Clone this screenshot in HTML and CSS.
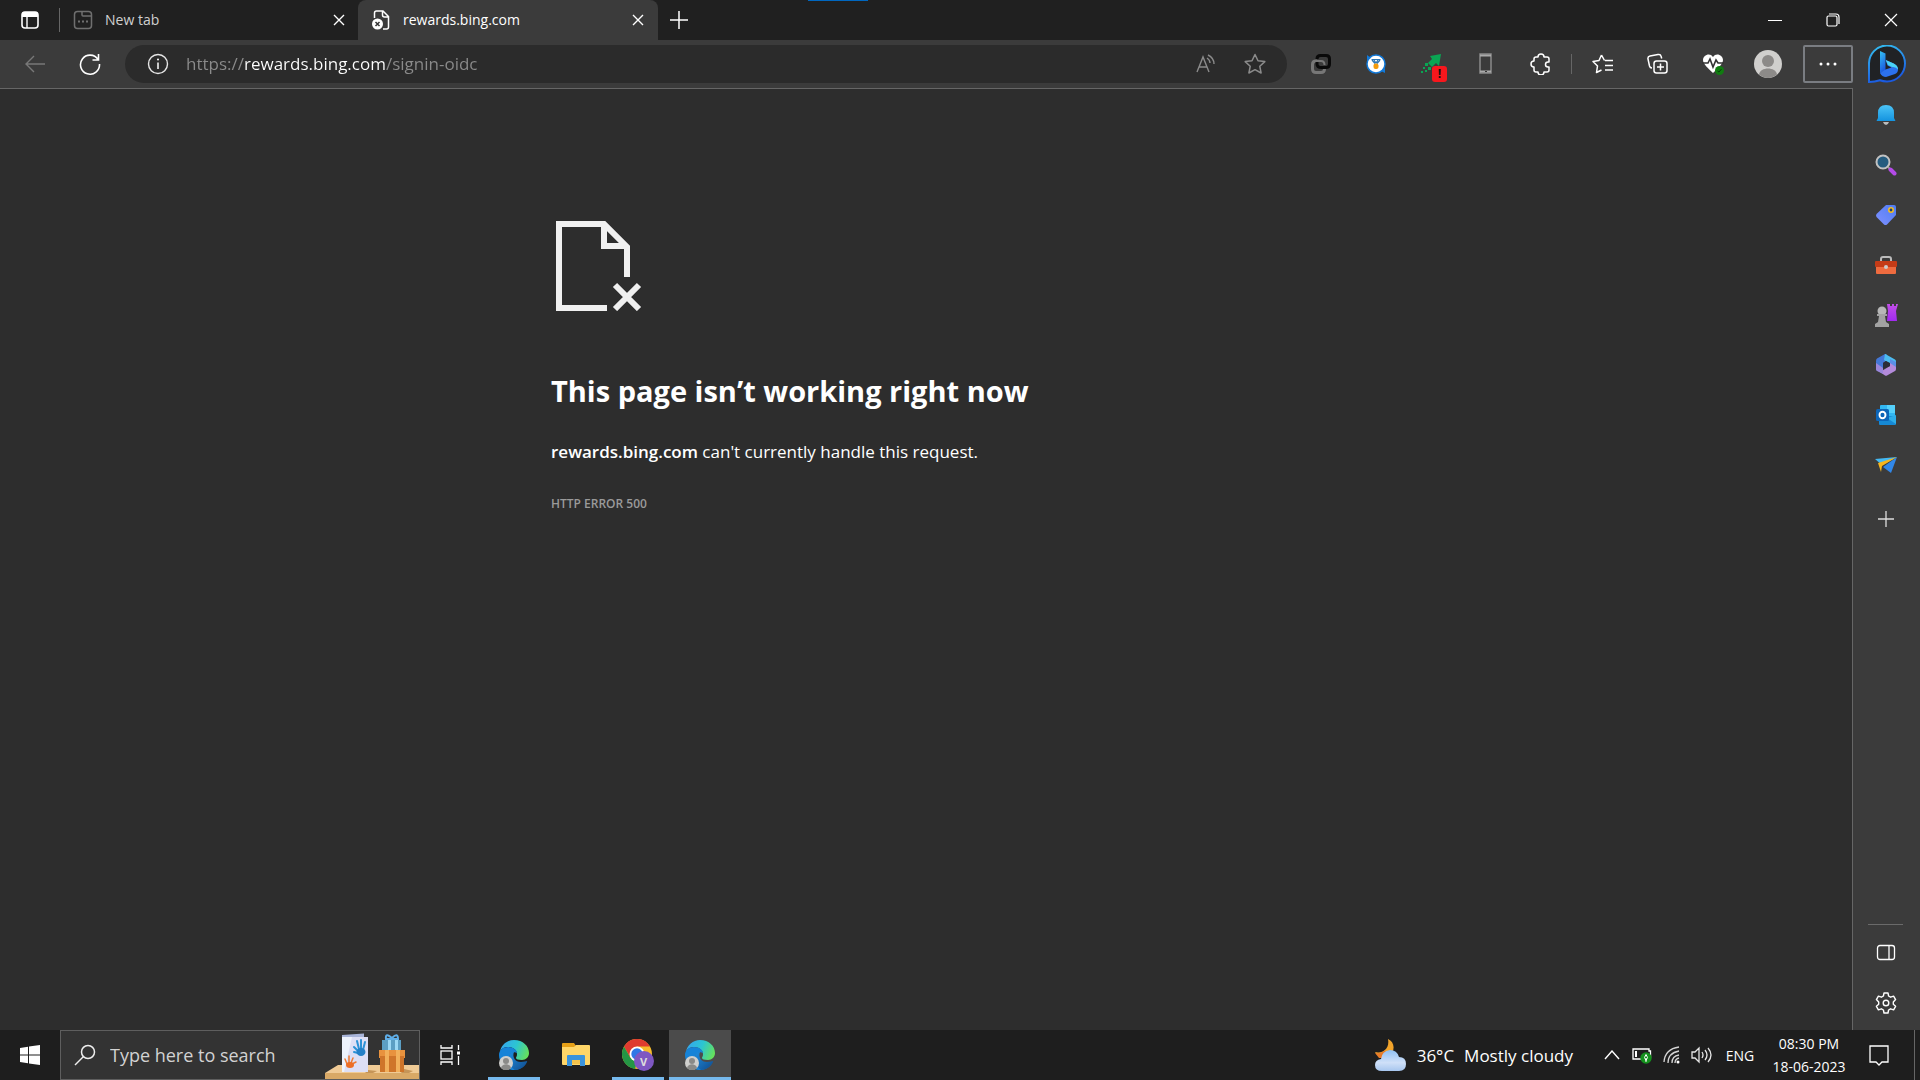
FILE: index.html
```html
<!DOCTYPE html>
<html lang="en">
<head>
    <meta charset="UTF-8">
    <meta name="viewport" content="width=device-width, initial-scale=1.0">
    <title>rewards.bing.com</title>
    <link rel="stylesheet" href="styles.css">
</head>
<body>
<!-- shared symbols -->
<svg class="defs" aria-hidden="true">
    <defs>
        <linearGradient id="edgeTop" x1="0" y1="0.3" x2="1" y2="0.6">
            <stop offset="0" stop-color="#35a5ee"/>
            <stop offset="0.5" stop-color="#2cc5d2"/>
            <stop offset="1" stop-color="#66e15b"/>
        </linearGradient>
        <linearGradient id="edgeLow" x1="0" y1="0" x2="1" y2="1">
            <stop offset="0" stop-color="#1d8de0"/>
            <stop offset="1" stop-color="#114a8b"/>
        </linearGradient>
        <linearGradient id="bingBlue" x1="0" y1="0" x2="0.3" y2="1">
            <stop offset="0" stop-color="#35c3f2"/>
            <stop offset="1" stop-color="#1b5ae0"/>
        </linearGradient>
        <linearGradient id="bellBlue" x1="0" y1="0" x2="0" y2="1">
            <stop offset="0" stop-color="#4cc4f7"/>
            <stop offset="1" stop-color="#1493df"/>
        </linearGradient>
        <linearGradient id="tagBlue" x1="1" y1="0" x2="0" y2="1">
            <stop offset="0" stop-color="#4f7df2"/>
            <stop offset="1" stop-color="#7f90ff"/>
        </linearGradient>
        <linearGradient id="rookPurple" x1="0" y1="0" x2="0" y2="1">
            <stop offset="0" stop-color="#c24fe8"/>
            <stop offset="1" stop-color="#a12af0"/>
        </linearGradient>
        <linearGradient id="cloud" x1="0" y1="0" x2="0" y2="1">
            <stop offset="0" stop-color="#8fc0f2"/>
            <stop offset="0.6" stop-color="#cfe0f8"/>
            <stop offset="1" stop-color="#a7c6ee"/>
        </linearGradient>
    </defs>
    <symbol id="edge" viewBox="0 0 30 30">
        <path d="M1 12C2 5 8 0 15 0c9 0 15 6 15 13 0 4-3 7-7 7-4 0-6-1-6-2 0-1 1-1 1-4 0-4-4-7-9-7-4 0-7 2-8 5z" fill="url(#edgeTop)"/>
        <path d="M0 15c0-5 4-8 9-8 5 0 9 3 9 6-3-2-8 0-8 5 0 6 5 9 10 9 3 0 6-2 7-4-2 4-7 7-12 7C7 30 0 23 0 15z" fill="#1683d8"/>
        <path d="M10 17c0-3 2-5 5-5-2 5 1 10 7 10 3 0 5-1 6-1 1 1-4 9-12 9-4-2-6-7-6-13z" fill="url(#edgeLow)"/>
        <circle cx="7" cy="23" r="7" fill="#d0d0ce"/>
        <circle cx="7" cy="21" r="3" fill="#8a8a88"/>
        <path d="M2 28c1-5 9-5 10 0-3 3-7 3-10 0z" fill="#8a8a88"/>
    </symbol>
    <symbol id="cross" viewBox="0 0 12 12">
        <path d="M1 1l10 10M11 1L1 11" fill="none" stroke="currentColor" stroke-width="1.4"/>
    </symbol>
</svg>

<div class="screen">
    <header class="tab-strip">
        <button class="tab-menu" aria-label="Tab actions menu">
            <svg width="20" height="20" viewBox="0 0 20 20">
                <rect x="2" y="2" width="16" height="16" rx="3" fill="none" stroke="#fff" stroke-width="1.6"/>
                <path d="M2 3.500q0-1.500 2-1.500h12q2 0 2 1.500V7H2z" fill="#fff"/>
                <path d="M7 7v11" stroke="#fff" stroke-width="1.400"/>
            </svg>
        </button>
        <div class="tab">
            <svg class="favicon" width="20" height="20" viewBox="0 0 20 20" fill="none" stroke="#6f6f6f" stroke-width="1.5">
                <rect x="1.500" y="1.500" width="17" height="17" rx="3"/>
                <path d="M9 2v3q0 1 1 1h8"/>
                <path d="M5 11.500h2M9 11.500h2M13 11.500h2" stroke-width="2"/>
            </svg>
            <span class="tab-title">New tab</span>
            <button class="tab-close" aria-label="Close tab"><svg width="12" height="12"><use href="#cross"/></svg></button>
        </div>
        <div class="tab tab-active">
            <svg class="favicon" width="20" height="20" viewBox="0 0 20 20">
                <path d="M3.500 8V3q0-2 2-2H12l5.500 5.500V17q0 2-2 2H12M11.500 1v4q0 2 2 2h4" fill="none" stroke="#fff" stroke-width="1.500"/>
                <circle cx="6.500" cy="14" r="5.500" fill="#fff"/>
                <path d="M4.500 12l4 4M8.500 12l-4 4" stroke="#333" stroke-width="1.500"/>
            </svg>
            <span class="tab-title">rewards.bing.com</span>
            <button class="tab-close" aria-label="Close tab"><svg width="12" height="12"><use href="#cross"/></svg></button>
        </div>
        <button class="new-tab" aria-label="New tab">
            <svg width="18" height="18" viewBox="0 0 18 18"><path d="M9 0v18M0 9h18" stroke="#fff" stroke-width="1.500"/></svg>
        </button>
        <div class="window-buttons">
            <button aria-label="Minimize"><svg width="14" height="14" viewBox="0 0 14 14"><path d="M0 7.500h14" stroke="#fff"/></svg></button>
            <button aria-label="Restore"><svg width="14" height="14" viewBox="0 0 14 14" fill="none" stroke="#fff" stroke-width="1.200"><rect x="1" y="3" width="10" height="10" rx="1.500"/><path d="M3 1h7q3 0 3 3v7"/></svg></button>
            <button aria-label="Close"><svg width="14" height="14" viewBox="0 0 14 14"><path d="M1 1l12 12M13 1L1 13" stroke="#fff" stroke-width="1.200"/></svg></button>
        </div>
        <span class="drag-mark"></span>
    </header>

    <nav class="toolbar">
        <button class="nav-button" aria-label="Back">
            <svg width="22" height="18" viewBox="0 0 22 18" fill="none" stroke="#787878" stroke-width="1.400"><path d="M21 9H2M10 1L2 9l8 8"/></svg>
        </button>
        <button class="nav-button" aria-label="Refresh">
            <svg width="22" height="22" viewBox="0 0 22 22" fill="none" stroke="#fff" stroke-width="1.600"><path d="M19 6.500A9.500 9.500 0 1 0 20.500 11M19.500 1v6h-6"/></svg>
        </button>
        <div class="address">
            <button class="icon-button site-info" aria-label="View site information">
                <svg width="22" height="22" viewBox="0 0 22 22"><circle cx="11" cy="11" r="9.500" fill="none" stroke="#e6e6e6" stroke-width="1.400"/><path d="M11 9.500V16" stroke="#fff" stroke-width="1.500"/><circle cx="11" cy="6.500" r="1" fill="#fff"/></svg>
            </button>
            <input class="url" type="text" value="https://rewards.bing.com/signin-oidc" aria-label="Address and search bar" spellcheck="false">
            <button class="icon-button" aria-label="Read aloud">
                <svg width="20" height="20" viewBox="0 0 20 20" fill="none" stroke="#8b8b8b" stroke-width="1.400"><path d="M1 18L7 3l6 15M3 13h8M11 4q3 2 3 5M12 1q6 3 6 9"/></svg>
            </button>
            <button class="icon-button" aria-label="Add this page to favorites">
                <svg width="22" height="22" viewBox="0 0 22 22" fill="none" stroke="#8b8b8b" stroke-width="1.500" stroke-linejoin="round"><path d="M11 1.500l3 6.300 6.800.8-5 4.700 1.300 6.700-6.100-3.300L4.900 20l1.300-6.700-5-4.700L8 7.800z"/></svg>
            </button>
        </div>
        <div class="tools">
            <button class="tool" aria-label="Link extension">
                <svg width="20" height="20" viewBox="0 0 20 20" fill="none" stroke-width="3"><path d="M6 7H5q-3.500 0-3.500 3.500V15q0 3.500 3.500 3.500h5q3.500 0 3.500-3.500v-3" stroke="#777"/><path d="M6 5q0-3.500 3.500-3.500H15q3.500 0 3.500 3.500v5q0 3.500-3.500 3.500h-4.500Q6 13.500 6 10V8" stroke="#0a0a0a"/><path d="M5 7h5q3.500 0 3.500 4" stroke="#777" stroke-width="2"/></svg>
            </button>
            <button class="tool" aria-label="Rewards extension">
                <svg width="20" height="20" viewBox="0 0 20 20"><circle cx="10" cy="10" r="9" fill="#fff" stroke="#1279d8" stroke-width="1.500"/><path d="M1 6V1l4 3zM19 14v5l-4-2z" fill="#1279d8"/><path d="M5.500 5.500h9M6 6l3 3.500M14 6l-3 3.500M8 6l2 3 2-3" fill="none" stroke="#2b75b5" stroke-width="1.200"/><rect x="7.500" y="9.500" width="5" height="5.500" rx="2" fill="#f39a0b"/></svg>
            </button>
            <button class="tool" aria-label="Growth extension">
                <svg width="20" height="20" viewBox="0 0 20 20" fill="#0aa553"><path d="M9 2L20 0l-2 12-3-3-4 4-4-4 4-4z"/><path d="M4 9h3v3H4zM7 13h3v3H7zM2 13h2v2H2zM4 16h2v2H4zM0 17h2v2H0z"/></svg>
                <span class="badge">!</span>
            </button>
            <button class="tool" aria-label="Phone extension">
                <svg width="14" height="22" viewBox="0 0 14 22"><rect x="1" y="1" width="11" height="19" fill="none" stroke="#8b8b8b" stroke-width="1.500"/><path d="M1 2.500h11M1 18.500h11" stroke="#aaa" stroke-width="2"/><path d="M6 18.500h2" stroke="#333"/></svg>
            </button>
            <button class="tool" aria-label="Extensions">
                <svg width="22" height="22" viewBox="0 0 22 22" fill="none" stroke="#fff" stroke-width="1.500" stroke-linejoin="round"><path d="M8 4a3 3 0 0 1 6 0h3q2 0 2 2v3h-1a2.500 2.500 0 0 0 0 5h1v3q0 2-2 2h-3a3 3 0 0 1-6 0H6q-2 0-2-2v-3a3 3 0 0 1 0-6V6q0-2 2-2z"/></svg>
            </button>
            <span class="tool-divider"></span>
            <button class="tool" aria-label="Favorites">
                <svg width="22" height="22" viewBox="0 0 22 22" fill="none" stroke="#fff" stroke-width="1.500" stroke-linejoin="round"><path d="M13 7.500h8M9.500 2L7 7.500l-6 1 4.500 4.500-1 6.500 5-2.500M9.500 2l3 5.500M13 12.500h8M13 17h8"/></svg>
            </button>
            <button class="tool" aria-label="Collections">
                <svg width="22" height="22" viewBox="0 0 22 22" fill="none" stroke="#fff" stroke-width="1.500"><rect x="7" y="8" width="13" height="12" rx="2.500"/><path d="M5 15q-2 0-2.500-2L1 6q-.5-2.500 2-3l8-1.500q2.500-.5 3 1.500l.7 2.500M13.500 10.500v7M10 14h7"/></svg>
            </button>
            <button class="tool" aria-label="Browser essentials">
                <svg width="22" height="22" viewBox="0 0 22 22"><path d="M11 4c3-5 10-2 10 3 0 4-5 8-10 13C6 15 1 11 1 7c0-5 7-8 10-3z" fill="#fff"/><path d="M0 10h6l2-4 3 8 3-7 2 3h6" fill="none" stroke="#333" stroke-width="1.600"/><circle cx="17.500" cy="17.500" r="4.500" fill="#107c10"/><path d="M15.500 18l1.500 1 2.500-3" fill="none" stroke="#073f07"/></svg>
            </button>
            <button class="tool" aria-label="Profile">
                <svg width="28" height="28" viewBox="0 0 28 28"><circle cx="14" cy="14" r="14" fill="#d0cfcd"/><circle cx="14" cy="11" r="6" fill="#8c8a88"/><path d="M5 24.500c1-8 17-8 18 0-5 4.600-13 4.600-18 0z" fill="#8c8a88"/></svg>
            </button>
            <button class="more" aria-label="Settings and more">
                <svg width="18" height="4" viewBox="0 0 18 4" fill="#fff"><circle cx="2" cy="2" r="1.500"/><circle cx="9" cy="2" r="1.500"/><circle cx="16" cy="2" r="1.500"/></svg>
            </button>
        </div>
        <button class="bing" aria-label="Discover">
            <svg width="38" height="38" viewBox="0 0 38 38"><path d="M1 37V19A18 18 0 1 1 19 36.500q-4 0-7-1.200Q7 37 1 37z" fill="#202225" stroke="url(#bingBlue)" stroke-width="2"/><path d="M12 6l5.500 2.500v17L12 28z" fill="url(#bingBlue)"/><path d="M12 28l5.500-3.500 6-2-4-2-1.800-5.500 8 3.500q4.300 2 4.300 6 0 3-3 4.500L18 32q-4 0-6-4z" fill="#2c71ee"/><path d="M17.700 15l8 3.500q4.300 2 4.300 6-2-3-6-2.500l-4-2z" fill="#4ad3f4"/></svg>
        </button>
    </nav>

    <div class="middle">
        <main class="page">
            <div class="error">
                <svg class="error-icon" width="86" height="90" viewBox="0 0 86 90" fill="none" stroke="#f0f0f0" stroke-width="6">
                    <path d="M51 87H3V3h45l23 23v30M48 4v21h22"/>
                    <path d="M59 64l24 24M83 64L59 88" />
                </svg>
                <h1>This page isn’t working right now</h1>
                <p><strong>rewards.bing.com</strong> can't currently handle this request.</p>
                <div class="error-code">HTTP ERROR 500</div>
            </div>
        </main>
        <aside class="sidebar">
            <button aria-label="Notifications"><svg width="22" height="22" viewBox="0 0 22 22"><path d="M8 18h6q-1 3-3 3t-3-3z" fill="#bbb"/><path d="M3 14V9q0-8 8-8t8 8v5l1.500 3h-19z" fill="url(#bellBlue)"/></svg></button>
            <button aria-label="Search"><svg width="22" height="22" viewBox="0 0 22 22"><path d="M13 13l3 3" stroke="#999" stroke-width="2"/><path d="M15.500 15.500l4 4" stroke="#b44be8" stroke-width="4" stroke-linecap="round"/><circle cx="8" cy="8" r="6.500" fill="#255c7f" stroke="#c2c2c2" stroke-width="2"/></svg></button>
            <button aria-label="Shopping"><svg width="22" height="22" viewBox="0 0 22 22"><path d="M11 1h8q2 0 2 2v8L12 20.500q-1.500 1-3 0L1.500 13q-1-1.500 0-3z" fill="url(#tagBlue)"/><circle cx="16" cy="6" r="2.200" fill="#173d78" stroke="#f5bd20" stroke-width="1.600"/></svg></button>
            <button aria-label="Tools"><svg width="24" height="20" viewBox="0 0 24 20"><path d="M7 6V4q0-2 2-2h6q2 0 2 2v2" fill="none" stroke="#bbb" stroke-width="2"/><path d="M2 11h20v7q0 1-1 1H3q-1 0-1-1z" fill="#ee6b3f"/><rect x="1" y="6" width="22" height="6" rx="1" fill="#c43b17"/><circle cx="12" cy="12" r="2" fill="#ccc"/></svg></button>
            <button aria-label="Games"><svg width="24" height="24" viewBox="0 0 24 24"><path d="M13 1h3v2h2V1h2v2h2V1h2l-2 7 1 10H13l1-10z" fill="url(#rookPurple)"/><circle cx="8" cy="8" r="4.500" fill="#b7b7b7"/><path d="M3 11h10v2h-2l1 6 3 2v3H1v-3l3-2 1-6H3z" fill="#a2a2a2"/></svg></button>
            <button aria-label="Microsoft 365"><svg width="22" height="22" viewBox="0 0 22 22"><path d="M10 0L2 4.500Q1 5 1 7v9l7 3V9l6-4-2-4q-1-1-2-1z" fill="#4377d6"/><path d="M10 0q1 0 2 1l8 4.500q1 .5 1 2V13L9 6z" fill="#4cbcef"/><path d="M21 9v6q0 1.500-1 2l-8 4.500q-1 .5-2 0L5 18l10-6V9z" fill="#b48bdb"/><path d="M15 9l6 4V8l-6-3z" fill="#5a8fe6"/><path d="M1 9v6q0 1.500 1 2l6 3v-6z" fill="#9a86da"/><path d="M8 9l3-2 4 2v3l-7 3z" fill="#2b2d38"/></svg></button>
            <button aria-label="Outlook"><svg width="22" height="22" viewBox="0 0 22 22"><rect x="5" y="1" width="15" height="12" rx="1" fill="#32b7f2"/><path d="M12 1h8v8h-8z" fill="#55d0fb"/><path d="M4 12h17v8q0 1-1 1H5q-1 0-1-1z" fill="#1689d5"/><path d="M21 11v9L12 14z" fill="#2eaee9"/><rect x="1" y="5" width="13" height="12" rx="1.500" fill="#0c65b8"/><ellipse cx="7.500" cy="11" rx="3" ry="3.300" fill="none" stroke="#fff" stroke-width="1.900"/></svg></button>
            <button aria-label="Drop"><svg width="22" height="18" viewBox="0 0 22 18"><path d="M0 3l22-2-15 8z" fill="#43b9f3"/><path d="M3 7l19-6L7 10l-1 6z" fill="#f7b51d"/><path d="M8 11L22 1l-6 16z" fill="#3187e8"/></svg></button>
            <button class="customize" aria-label="Customize"><svg width="16" height="16" viewBox="0 0 16 16"><path d="M8 0v16M0 8h16" stroke="#ddd" stroke-width="1.300"/></svg></button>
            <span class="sidebar-divider"></span>
            <button aria-label="Hide sidebar"><svg width="20" height="18" viewBox="0 0 20 18" fill="none" stroke="#fff" stroke-width="1.300"><rect x="1.500" y="1.500" width="17" height="14" rx="2.500"/><path d="M13 2v13"/></svg></button>
            <button aria-label="Sidebar settings"><svg width="22" height="22" viewBox="0 0 22 22" fill="none" stroke="#fff" stroke-width="1.400" stroke-linejoin="round"><path d="M9 1h4l.6 3 2 1.200 3-1 2 3.400L18.300 10v2.300l2.300 2-2 3.500-3-1-2 1.200L13 21H9l-.6-3-2-1.200-3 1-2-3.500 2.300-2V10L1.400 7.600l2-3.400 3 1 2-1.200z"/><circle cx="11" cy="11" r="2.800"/></svg></button>
        </aside>
    </div>

    <footer class="taskbar">
        <button class="start" aria-label="Start"><svg width="20" height="20" viewBox="0 0 20 20" fill="#fff"><path d="M0 3l8-1.200v7.700H0zM9 1.600L20 0v9.500H9zM0 10.500h8v7.700L0 17zM9 10.500h11V20L9 18.400z"/></svg></button>
        <label class="search">
            <svg width="22" height="22" viewBox="0 0 22 22" fill="none" stroke="#eee" stroke-width="1.500"><circle cx="14" cy="8" r="6.500"/><path d="M9.500 12.500L1 21"/></svg>
            <input type="text" placeholder="Type here to search" aria-label="Type here to search">
            <svg class="search-art" width="94" height="48" viewBox="0 0 94 48">
                <path d="M13 34h82v8H0z" fill="#f0cb96"/>
                <path d="M0 42h95v6H0z" fill="#d9a966"/>
                <path d="M43 39l9 1-4 2h-8zM79 38l9 2-4 2h-8z" fill="#c59558"/>
                <path d="M17 4l22-1.500V8H17z" fill="#a8b4d8"/>
                <path d="M17 6h26v35H17z" fill="#dddff5"/>
                <path d="M17 6l10 0-8 35h-2z" fill="#eef3fc"/>
                <g fill="none" stroke="#2b91d6" stroke-width="2" stroke-linecap="round"><path d="M29 16l4 4M32 10l2 8M36 9l0 9M40 11l-2 8M29 21l4 1"/></g>
                <ellipse cx="36" cy="21" rx="4.500" ry="4" fill="#2480c7"/>
                <g fill="none" stroke="#ee7a31" stroke-width="1.500" stroke-linecap="round"><path d="M20 28l2 5M24 25l0 7M28 27l-2 5M31 31l-4 2"/></g>
                <ellipse cx="25" cy="34" rx="4" ry="3" fill="#ec6e26"/>
                <path d="M57 9h19v11H57z" fill="#5c9fc4"/>
                <path d="M63 9h3v11h-3zM70 9h3v11h-3z" fill="#9cd8f5"/>
                <path d="M67 7q-7-6-6 1h12q0-7-6-1z" fill="none" stroke="#5faee8" stroke-width="2"/>
                <path d="M54 19h26v8H54z" fill="#e8923e"/>
                <path d="M55 25h24v16H55z" fill="#cf752a"/>
                <path d="M60 19h4v22h-4zM71 19h4v22h-4z" fill="#f2b05b"/>
            </svg>
        </label>
        <button class="task-view" aria-label="Task View"><svg width="20" height="20" viewBox="0 0 20 20" fill="none" stroke="#fff" stroke-width="1.300"><path d="M1 0v3h11V0M1 20v-3h11v3M18.500 0v5M18.500 11v9"/><rect x="1" y="6" width="11" height="8"/><path d="M17 8h3" stroke-width="3"/></svg></button>
        <button class="app app-open" aria-label="Microsoft Edge"><svg width="30" height="30"><use href="#edge"/></svg></button>
        <button class="app" aria-label="File Explorer"><svg width="28" height="24" viewBox="0 0 28 24"><path d="M0 1q0-1 1-1h11l2 3h-1v4H0z" fill="#e6a017"/><path d="M0 4h12l2-2h13q1 0 1 1v18q0 1-1 1H1q-1 0-1-1z" fill="#ffd668"/><path d="M5 23V13q0-1 1-1h16q1 0 1 1v10h-5v-6h-8v6z" fill="#3a93dc"/><path d="M10 17h8v4h-8z" fill="#f3c24b"/></svg></button>
        <button class="app app-open" aria-label="Google Chrome"><svg width="32" height="32" viewBox="0 0 32 32"><circle cx="15" cy="15" r="15" fill="#f6ba2c"/><path d="M2 7.500a15 15 0 0 1 26 0H15L8.500 19z" fill="#df3b30"/><path d="M2 7.500L8.500 19 15 22.500l-2 7.400A15 15 0 0 1 2 7.500z" fill="#249645"/><circle cx="15" cy="15" r="7.500" fill="#fff"/><circle cx="15" cy="15" r="5.700" fill="#2f77e6"/><circle cx="22" cy="22" r="10" fill="#7e57c2"/></svg><span class="profile-letter">V</span></button>
        <button class="app app-open app-active" aria-label="Microsoft Edge, rewards.bing.com"><svg width="30" height="30"><use href="#edge"/></svg></button>

        <div class="tray">
            <button class="weather">
                <svg width="32" height="32" viewBox="0 0 32 32"><path d="M13 0c7 3 8 13 0 17C8 19 2 17 0 13c8 2 15-4 13-13z" fill="#f2a42b"/><path d="M0 14c5 1 8-1 10-3l2 8H4z" fill="#e87b28"/><path d="M7 32q-7 0-7-6 0-5 6-6 1-8 9-9 7 0 9 7 7 0 7 7t-7 7z" fill="url(#cloud)"/></svg>
                <span>36°C</span>
                <span>Mostly cloudy</span>
            </button>
            <button class="tray-icon" aria-label="Show hidden icons"><svg width="16" height="10" viewBox="0 0 16 10"><path d="M1 9l7-8 7 8" fill="none" stroke="#fff" stroke-width="1.400"/></svg></button>
            <button class="tray-icon" aria-label="Battery"><svg width="20" height="18" viewBox="0 0 20 18"><path d="M1 3h16v2h1.500v6H17v2H1z" fill="none" stroke="#fff" stroke-width="1.300"/><path d="M4 5v6" stroke="#fff" stroke-width="2"/><circle cx="14" cy="12" r="5.700" fill="#14911d"/><path d="M14 8.500q3 3 0 6-3-3 0-6zM14 12v4" fill="none" stroke="#fff"/></svg></button>
            <button class="tray-icon" aria-label="Network"><svg width="18" height="18" viewBox="0 0 18 18" fill="none" stroke="#d5d5d5" stroke-width="1.300"><path d="M1 16Q2 3 16 1M5 17Q5 7 16 5M9 17q0-7 7-8M12 17q0-4 4-5"/><circle cx="15" cy="16" r="1.500" fill="#fff" stroke="none"/></svg></button>
            <button class="tray-icon" aria-label="Volume"><svg width="22" height="18" viewBox="0 0 22 18" fill="none" stroke="#e6e6e6" stroke-width="1.300"><path d="M1 6h3l4-4v14l-4-4H1zM11 6q2 3 0 6M14 4q4 5 0 10M17 2q6 7 0 14"/></svg></button>
            <button class="language">ENG</button>
            <button class="clock"><span>08:30 PM</span><span>18-06-2023</span></button>
            <button class="action-center" aria-label="Notifications"><svg width="20" height="22" viewBox="0 0 20 22"><path d="M1 2h18v16h-6l-3 3-3-3H1z" fill="none" stroke="#fff" stroke-width="1.300"/></svg></button>
        </div>
    </footer>
</div>
</body>
</html>
```
FILE: styles.css
```css
* {
    box-sizing: border-box;
}
body {
    margin: 0;
    background-color: #2d2d2d;
    color: #fff;
    font-family: "Open Sans", "Noto Sans", sans-serif;
    font-size: 14px;
}
button {
    display: flex;
    align-items: center;
    justify-content: center;
    flex-shrink: 0;
    padding: 0;
    border: none;
    background: none;
    color: inherit;
    font: inherit;
}
input {
    min-width: 0;
    padding: 0;
    border: none;
    outline: none;
    background: none;
    font: inherit;
}
svg {
    display: block;
    flex-shrink: 0;
}
.defs {
    position: absolute;
    width: 0;
    height: 0;
}
.screen {
    display: flex;
    flex-direction: column;
    height: 100vh;
}

/* tabs */
.tab-strip {
    position: relative;
    display: flex;
    height: 40px;
    background-color: #202020;
}
.tab-menu {
    width: 59px;
}
.tab {
    display: flex;
    align-items: center;
    width: 299px;
    padding: 0 11px 0 14px;
}
.tab:not(.tab-active) {
    background: linear-gradient(#666, #666) left center / 1px 24px no-repeat;
    color: #d0d0d0;
}
.tab-active {
    width: 300px;
    padding: 0 12px 0 13px;
    border-radius: 8px 8px 0 0;
    background-color: #3b3b3b;
}
.tab-title {
    flex: 1;
    margin-left: 12px;
    padding-bottom: 2px;
}
.tab-close {
    width: 16px;
    height: 16px;
    color: #fff;
}
.new-tab {
    width: 42px;
}
.window-buttons {
    display: flex;
    margin-left: auto;
}
.window-buttons button {
    width: 58px;
}
.drag-mark {
    position: absolute;
    top: 0;
    left: 808px;
    width: 60px;
    height: 1px;
    background-color: #0067c0;
}

/* toolbar */
.toolbar {
    display: flex;
    align-items: center;
    height: 48px;
    padding-left: 7px;
    background-color: #3b3b3b;
}
.nav-button {
    width: 55px;
    height: 38px;
}
.address {
    display: flex;
    flex: 1;
    align-items: center;
    height: 38px;
    margin: 0 6px 0 8px;
    padding: 0 8px;
    border-radius: 19px;
    background-color: #2b2b2b;
}
.icon-button {
    width: 49px;
    height: 38px;
}
.site-info {
    margin-right: 4px;
}
/* scheme and path are dimmed, the host is bright */
.url {
    flex: 1;
    height: 30px;
    padding-bottom: 2px;
    background: linear-gradient(90deg, #8b8b8b 58px, #fff 58px, #fff 199px, #8b8b8b 199px);
    background-clip: text;
    -webkit-background-clip: text;
    -webkit-text-fill-color: transparent;
    font-size: 17px;
}
.tools {
    display: flex;
    align-items: center;
}
.tool {
    position: relative;
    width: 55px;
    height: 38px;
}
.badge {
    position: absolute;
    right: 11px;
    bottom: 1px;
    width: 15px;
    height: 16px;
    border-radius: 3px;
    background-color: #f8171d;
    color: #111;
    font-size: 12px;
    font-weight: bold;
    line-height: 16px;
}
.tool-divider {
    width: 1px;
    height: 20px;
    margin: 0 3px;
    background-color: #666;
}
.more {
    width: 50px;
    height: 38px;
    margin-left: 8px;
    border: 2px solid #7a7d82;
    border-radius: 2px;
}
.bing {
    width: 67px;
}

/* page and sidebar */
.middle {
    display: flex;
    flex: 1;
    min-height: 0;
    background-color: #3b3b3b;
}
.page {
    flex: 1;
    border: 1px solid #666;
    border-width: 1px 1px 0 0;
    background-color: #2d2d2d;
}
.error {
    max-width: 750px;
    margin: 0 auto;
    padding-top: 132px;
}
.error-icon {
    margin-left: 5px;
}
h1 {
    margin: 56px 0 0;
    font-size: 29px;
    font-weight: bold;
    line-height: 48px;
}
.error p {
    margin: 23px 0 0;
    font-size: 17px;
    line-height: 28px;
}
strong {
    font-weight: 600;
}
.error-code {
    margin-top: 26px;
    color: #9a9a9a;
    font-size: 12px;
    font-weight: 600;
    line-height: 24px;
}
.sidebar {
    display: flex;
    flex-direction: column;
    align-items: center;
    width: 67px;
    padding: 2px 2px 2px 0;
}
.sidebar button {
    width: 50px;
    height: 50px;
}
.sidebar .customize {
    margin-top: 4px;
}
.sidebar-divider {
    width: 35px;
    height: 1px;
    margin: auto 0 3px;
    background-color: #6a6a6a;
}

/* taskbar */
.taskbar {
    display: flex;
    height: 50px;
    background-color: #1e1e1e;
}
.start {
    width: 60px;
}
.search {
    display: flex;
    align-items: center;
    width: 360px;
    padding-left: 13px;
    border: 1px solid #5e5e5e;
    background-color: #333;
}
.search input {
    flex: 1;
    margin-left: 14px;
    color: #d2d2d2;
    font-size: 18px;
}
.search input::placeholder {
    color: #d2d2d2;
}
.task-view {
    width: 60px;
    margin-right: 3px;
}
.app {
    position: relative;
    width: 62px;
}
.app-open::after {
    position: absolute;
    right: 5px;
    bottom: 0;
    left: 5px;
    height: 3px;
    background-color: #76b9ed;
    content: "";
}
.app-active {
    background-color: #4b4b4b;
}
.app-active::after {
    right: 0;
    left: 0;
}
.profile-letter {
    position: absolute;
    top: 23px;
    left: 33px;
    color: #ddd;
    font-size: 11px;
    font-weight: bold;
    line-height: 18px;
}
.tray {
    display: flex;
    align-items: center;
    margin-left: auto;
    padding-right: 17px;
    background: linear-gradient(#666, #666) right 5px top / 1px 100% no-repeat;
}
.weather {
    gap: 10px;
    margin-right: 24px;
    font-size: 17px;
}
.tray-icon {
    width: 30px;
    height: 50px;
}
.language {
    width: 46px;
}
.clock {
    flex-direction: column;
    width: 92px;
    line-height: 23px;
}
.action-center {
    width: 48px;
    height: 50px;
}
```
